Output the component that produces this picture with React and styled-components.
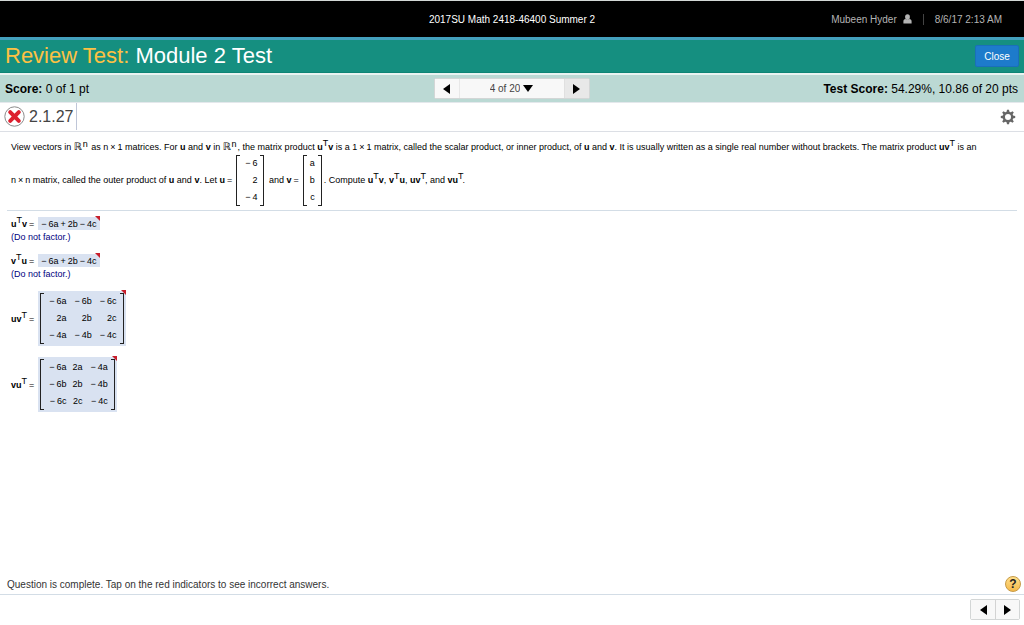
import React, { useState } from 'react';
import styled, { createGlobalStyle } from 'styled-components';

const GlobalStyle = createGlobalStyle`
  * {
    box-sizing: border-box;
  }

  body {
    margin: 0;
    background: #fff;
    color: #000;
    font-family: "Liberation Sans", Arial, sans-serif;
    font-size: 10px;
  }

  button, select {
    font: inherit;
    margin: 0;
  }
`;

const Page = styled.div`
  display: flex;
  flex-direction: column;
  min-height: 100vh;
`;

const TopBar = styled.header`
  display: grid;
  grid-template-columns: 1fr auto 1fr;
  align-items: center;
  height: 40px;
  padding: 0 22px;
  background: #000;
  border-top: 1px solid #d3d8d6;
  border-bottom: 3px solid #43a0bd;
`;

const Course = styled.div`
  grid-column: 2;
  color: #fff;
`;

const Account = styled.div`
  display: flex;
  justify-content: flex-end;
  align-items: center;
  gap: 6px;
  color: #b4b4b4;
`;

const Divider = styled.span`
  width: 1px;
  height: 11px;
  margin: 0 5px;
  background: #444;
`;

const TitleBar = styled.div`
  display: flex;
  justify-content: space-between;
  align-items: center;
  height: 33px;
  padding: 0 5px;
  background: #158f80;
  border-bottom: 1px solid #0e8475;
`;

const Title = styled.h1`
  margin: 0;
  color: #fff;
  font-size: 22px;
  font-weight: normal;
`;

const TitleKind = styled.span`
  color: #fdc143;
`;

const CloseButton = styled.button`
  width: 44px;
  height: 22px;
  padding: 0;
  border: 1px solid #1a6fba;
  border-radius: 2px;
  background: #1d7bcb;
  color: #fff;
`;

const ScoreBar = styled.div`
  display: grid;
  grid-template-columns: 1fr auto 1fr;
  align-items: center;
  height: 30px;
  padding: 0 6px 0 5px;
  background: #bbd9d4;
  border-top: 2px solid #e9f3f1;
  border-bottom: 1px solid #e4e8ec;
`;

const Score = styled.div`
  font-size: 12px;
  line-height: 14px;
  text-align: ${props => props.$align || 'left'};
`;

const Pager = styled.nav`
  display: flex;
  height: 21px;
  border: 1px solid #d3d6d6;
  border-radius: 2px;
  background: #f8f8f8;
`;

const PagerButton = styled.button`
  display: flex;
  justify-content: center;
  align-items: center;
  width: 24px;
  padding: 0;
  border: 0;
  background: ${props => (props.$shaded ? '#e8e8e8' : '#f8f8f8')};

  & + & {
    border-left: 1px solid #d3d3d3;
  }
`;

const PagerPicker = styled.label`
  display: flex;
  justify-content: center;
  align-items: center;
  gap: 3px;
  width: 106px;
  border-left: 1px solid #e8e8e8;
  border-right: 1px solid #e0e0e0;
`;

const PagerSelect = styled.select`
  appearance: none;
  field-sizing: content;
  padding: 0;
  border: 0;
  background: transparent;
  color: #444;
`;

const QuestionBar = styled.div`
  display: flex;
  justify-content: space-between;
  align-items: flex-start;
  height: 29px;
  padding-right: 8px;
  border-bottom: 1px solid #dcdfe5;
`;

const QuestionTab = styled.div`
  display: flex;
  align-items: center;
  gap: 4px;
  height: 27px;
  padding: 0 3px 0 4px;
  border-right: 1px solid #bfc6d8;
  color: #444;
  font-size: 16px;
`;

const IconButton = styled.button`
  display: flex;
  align-items: center;
  height: 27px;
  padding: 0;
  border: 0;
  background: none;
`;

const Content = styled.main`
  flex: 1;
  padding: 7px 7px 0;
  font-size: 9px;
`;

const Problem = styled.p`
  margin: 0;
  padding: 0 4px 4px;
  border-bottom: 1px solid #d3dde6;
  line-height: 15px;
  word-break: keep-all;
`;

const Sup = styled.sup`
  position: relative;
  top: ${props => (props.$low ? -3 : -4)}px;
  margin: ${props => (props.$low ? '0 1px' : 0)};
  font-size: 9px;
  line-height: 0;
  vertical-align: baseline;
`;

const Real = styled.span`
  font-family: "DejaVu Sans", sans-serif;
  font-size: 10px;
`;

const Op = styled.span`
  margin: 0 2px;
`;

const Minus = styled.span`
  margin-right: 2px;
`;

const MatrixBox = styled.span`
  display: inline-flex;
  margin: 0 2px;
  vertical-align: middle;
`;

const Bracket = styled.span`
  width: 4px;
  border: 1px solid #222;
  border-left-width: ${props => (props.$right ? 0 : '1px')};
  border-right-width: ${props => (props.$right ? '1px' : 0)};
`;

const Cells = styled.table`
  border-collapse: collapse;
  line-height: 17px;
`;

const Cell = styled.td`
  padding: 0 3px 0 ${props => (props.$negative ? 5 : 3)}px;
  text-align: right;
  white-space: nowrap;
`;

const Answers = styled.div`
  padding: 6px 4px 0;
`;

const AnswerRow = styled.div`
  display: flex;
  align-items: center;
  gap: 2px;
  margin-bottom: ${props => props.$gap || 0}px;
`;

const Given = styled.span`
  position: relative;
  display: flex;
  align-items: center;
  min-height: 13px;
  padding: 0 2px;
  background: #d9e2f1;

  ${MatrixBox} {
    margin: 2px 0;
  }
`;

const SumText = styled.span`
  padding: 0 1px;
`;

const Flag = styled.svg`
  position: absolute;
  top: -1px;
  right: 0;
`;

const Hint = styled.div`
  margin-bottom: 9px;
  color: #000080;
  line-height: 15px;
`;

const StatusBar = styled.div`
  display: flex;
  justify-content: space-between;
  align-items: center;
  height: 21px;
  padding: 0 3px 0 7px;
  border-bottom: 1px solid #d3dde6;
  color: #333;
`;

const HelpButton = styled.button`
  width: 16px;
  height: 16px;
  padding: 0;
  border: 1px solid #c79a45;
  border-radius: 50%;
  background: linear-gradient(#ffe08c, #f5b94a);
  color: #222;
  font-size: 12px;
  font-weight: bold;
  line-height: 14px;
`;

const Footer = styled.footer`
  display: flex;
  justify-content: flex-end;
  height: 30px;
  padding: 4px 4px;
`;

const Triangle = ({ dir }) => {
  const points = {
    left: '7,0 7,10 0,5',
    right: '0,0 0,10 7,5',
    down: '0,0 10,0 5,7',
  };
  const down = dir === 'down';
  return (
    <svg width={down ? 10 : 7} height={down ? 7 : 10} aria-hidden="true">
      <polygon points={points[dir]} fill="#000" />
    </svg>
  );
};

const UserIcon = () => (
  <svg width="9" height="10" viewBox="0 0 9 10" aria-hidden="true">
    <ellipse cx="4.5" cy="3.1" rx="2.4" ry="2.8" fill="#b4b4b4" />
    <path d="M0.4 9.4V7.4C0.4 6 1.3 5.2 2.4 5.1Q4.5 6.6 6.6 5.1C7.7 5.2 8.6 6 8.6 7.4V9.4Z" fill="#b4b4b4" />
  </svg>
);

const WrongIcon = () => (
  <svg width="21" height="21" viewBox="0 0 21 21" role="img" aria-label="Incorrect">
    <circle cx="10.5" cy="10.5" r="9.7" fill="#fff" stroke="#8b8b8b" />
    <path
      d="M6.2 6.2L14.8 14.8M14.8 6.2L6.2 14.8"
      stroke="#dd1f2d"
      strokeWidth="4"
      strokeLinecap="round"
    />
  </svg>
);

const GearIcon = () => (
  <svg width="16" height="16" viewBox="-8 -8 16 16" aria-hidden="true">
    <circle r="4.2" fill="none" stroke="#666" strokeWidth="2.4" />
    {[0, 45, 90, 135, 180, 225, 270, 315].map(angle => (
      <path key={angle} d="M-1.5 -4.6L-1 -7.2H1L1.5 -4.6Z" fill="#666" transform={`rotate(${angle})`} />
    ))}
  </svg>
);

const T = () => <Sup>T</Sup>;

const Matrix = ({ rows }) => (
  <MatrixBox>
    <Bracket />
    <Cells>
      <tbody>
        {rows.map(row => (
          <tr key={row.join()}>
            {row.map(value => (
              <Cell key={value} $negative={value[0] === '-'}>
                {value[0] === '-' ? <><Minus>−</Minus>{value.slice(1)}</> : value}
              </Cell>
            ))}
          </tr>
        ))}
      </tbody>
    </Cells>
    <Bracket $right />
  </MatrixBox>
);

const Answer = ({ children }) => (
  <Given>
    {children}
    <Flag width="5" height="5" aria-hidden="true">
      <polygon points="0,0 5,0 5,5" fill="#c81e2b" />
    </Flag>
  </Given>
);

const Sum = () => (
  <SumText><Minus>−</Minus>6a<Op>+</Op>2b<Op>−</Op>4c</SumText>
);

const questions = Array.from({ length: 20 }, (_, i) => i + 1);

const App = () => {
  const [question, setQuestion] = useState(4);

  return (
    <Page>
      <GlobalStyle />
      <TopBar>
        <Course>2017SU Math 2418-46400 Summer 2</Course>
        <Account>
          Mubeen Hyder
          <UserIcon />
          <Divider />
          8/6/17 2:13 AM
        </Account>
      </TopBar>
      <TitleBar>
        <Title><TitleKind>Review Test:</TitleKind> Module 2 Test</Title>
        <CloseButton type="button">Close</CloseButton>
      </TitleBar>
      <ScoreBar>
        <Score><b>Score:</b> 0 of 1 pt</Score>
        <Pager aria-label="Questions">
          <PagerButton type="button" aria-label="Previous question"><Triangle dir="left" /></PagerButton>
          <PagerPicker>
            <PagerSelect
              aria-label="Question"
              value={question}
              onChange={e => setQuestion(Number(e.target.value))}
            >
              {questions.map(n => <option key={n} value={n}>{`${n} of 20`}</option>)}
            </PagerSelect>
            <Triangle dir="down" />
          </PagerPicker>
          <PagerButton type="button" $shaded aria-label="Next question"><Triangle dir="right" /></PagerButton>
        </Pager>
        <Score $align="right"><b>Test Score:</b> 54.29%, 10.86 of 20 pts</Score>
      </ScoreBar>
      <QuestionBar>
        <QuestionTab><WrongIcon />2.1.27</QuestionTab>
        <IconButton type="button" aria-label="Settings"><GearIcon /></IconButton>
      </QuestionBar>

      <Content>
        <Problem>
          View vectors in <Real>ℝ</Real><Sup $low>n</Sup> as n<Op>×</Op>1 matrices. For <b>u</b> and <b>v</b> in{' '}
          <Real>ℝ</Real><Sup $low>n</Sup>, the matrix product <b>u</b><T /><b>v</b> is a 1<Op>×</Op>1 matrix,
          called the scalar product, or inner product, of <b>u</b> and <b>v</b>. It is usually written as a
          single real number without brackets. The matrix product <b>uv</b><T /> is an n<Op>×</Op>n&nbsp;matrix,
          called the outer product of <b>u</b> and <b>v</b>. Let <b>u</b><Op>=</Op>
          <Matrix rows={[['-6'], ['2'], ['-4']]} />
          {' '}and <b>v</b><Op>=</Op>
          <Matrix rows={[['a'], ['b'], ['c']]} />
          . Compute <b>u</b><T /><b>v</b>, <b>v</b><T /><b>u</b>, <b>uv</b><T />, and <b>vu</b><T />.
        </Problem>

        <Answers>
          <AnswerRow>
            <span><b>u</b><T /><b>v</b><Op>=</Op></span>
            <Answer><Sum /></Answer>
          </AnswerRow>
          <Hint>(Do not factor.)</Hint>
          <AnswerRow>
            <span><b>v</b><T /><b>u</b><Op>=</Op></span>
            <Answer><Sum /></Answer>
          </AnswerRow>
          <Hint>(Do not factor.)</Hint>
          <AnswerRow $gap={11}>
            <span><b>uv</b><T /><Op>=</Op></span>
            <Answer>
              <Matrix rows={[['-6a', '-6b', '-6c'], ['2a', '2b', '2c'], ['-4a', '-4b', '-4c']]} />
            </Answer>
          </AnswerRow>
          <AnswerRow>
            <span><b>vu</b><T /><Op>=</Op></span>
            <Answer>
              <Matrix rows={[['-6a', '2a', '-4a'], ['-6b', '2b', '-4b'], ['-6c', '2c', '-4c']]} />
            </Answer>
          </AnswerRow>
        </Answers>
      </Content>

      <StatusBar>
        Question is complete. Tap on the red indicators to see incorrect answers.
        <HelpButton type="button" aria-label="Help">?</HelpButton>
      </StatusBar>
      <Footer>
        <Pager aria-label="Steps">
          <PagerButton type="button" aria-label="Previous"><Triangle dir="left" /></PagerButton>
          <PagerButton type="button" aria-label="Next"><Triangle dir="right" /></PagerButton>
        </Pager>
      </Footer>
    </Page>
  );
};

export default App;
